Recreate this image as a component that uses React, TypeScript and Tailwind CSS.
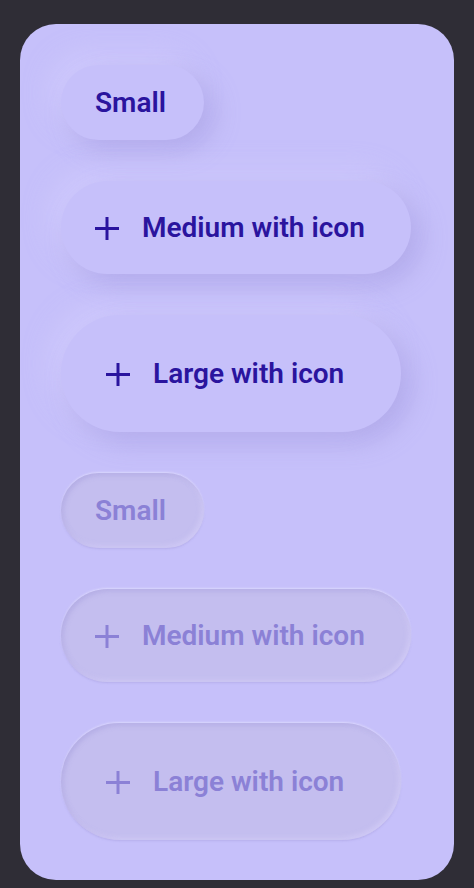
import { type ReactNode } from "react";

/** Plus icon, 24px, drawn stroke. */
function Plus() {
  return (
    <svg viewBox="0 0 24 24" className="size-6 shrink-0" fill="none" stroke="currentColor" strokeWidth={3}>
      <path d="M12 1v23M0 12.5h24" />
    </svg>
  );
}

type Tamanho = "sm" | "md" | "lg";

const tamanhos: Record<Tamanho, string> = {
  sm: "h-[75px] w-[143px] pl-[34px]",
  md: "h-[93px] w-[350px] pl-[34px] gap-[23px]",
  lg: "h-[117px] w-[340px] pl-[45px] gap-[23px]",
};

function NeoButton({
  children,
  tamanho,
  icon = false,
  disabled = false,
}: {
  children: ReactNode;
  tamanho: Tamanho;
  icon?: boolean;
  disabled?: boolean;
}) {
  const estado = disabled
    ? "bg-[#c4beef] text-[#8b81d6] shadow-[inset_2px_2px_5px_rgba(150,140,210,0.35),inset_-2px_-2px_5px_rgba(225,220,255,0.5),0_-1px_2px_rgba(230,226,255,0.7),0_1px_2px_rgba(160,150,220,0.45)]"
    : "bg-[#c6c0fa] text-[#2a149e] shadow-[10px_10px_26px_rgba(150,140,215,0.4),-10px_-10px_26px_rgba(215,210,255,0.55)]";
  return (
    <button
      disabled={disabled}
      className={`flex shrink-0 items-center rounded-full text-[28px] font-semibold leading-8 ${tamanhos[tamanho]} ${estado}`}
    >
      {icon ? <Plus /> : null}
      <span>{children}</span>
    </button>
  );
}

export default function App() {
  return (
    <div className="min-h-[888px] bg-[#2f2d36] px-5 py-6 font-['Roboto',sans-serif]">
      <div className="flex h-[856px] flex-col items-start gap-[41px] rounded-[36px] bg-[#c6c0fa] px-[41px] pt-[41px]">
        <NeoButton tamanho="sm">Small</NeoButton>
        <NeoButton tamanho="md" icon>
          Medium with icon
        </NeoButton>
        <NeoButton tamanho="lg" icon>
          Large with icon
        </NeoButton>
        <NeoButton tamanho="sm" disabled>
          Small
        </NeoButton>
        <NeoButton tamanho="md" icon disabled>
          Medium with icon
        </NeoButton>
        <NeoButton tamanho="lg" icon disabled>
          Large with icon
        </NeoButton>
      </div>
    </div>
  );
}
